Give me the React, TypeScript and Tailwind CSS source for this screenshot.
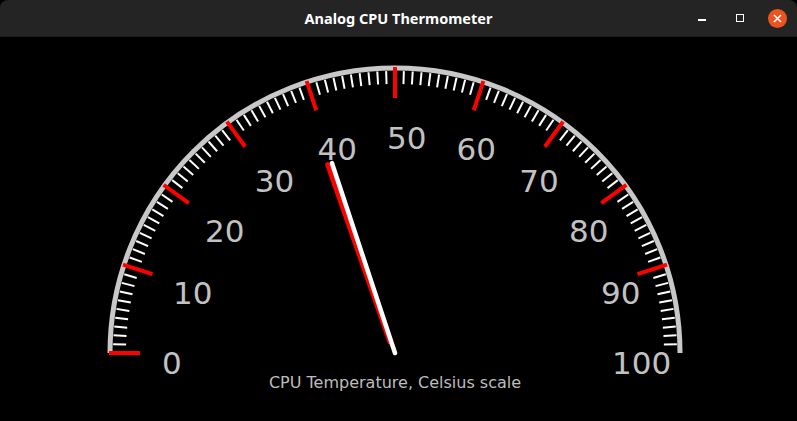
import React from 'react'

const CX = 395
const CY = 353
const VALUE = 39.8

const polar = (r: number, deg: number) => {
   const a = (deg * Math.PI) / 180
   return { x: CX + r * Math.cos(a), y: CY - r * Math.sin(a) }
}

const angleOf = (v: number) => 180 - v * 1.8

function TitleBar() {
   return (
      <header className="relative flex h-[37px] shrink-0 items-center justify-center rounded-t-[8px] bg-[#242424] border-b border-[#1a1a1a]">
         <h1 className="text-[14.5px] font-bold text-white font-['Noto_Sans',sans-serif] leading-none">
            Analog CPU Thermometer
         </h1>
         <div className="absolute right-[10px] top-0 flex h-full items-center gap-[18px]">
            <button className="flex h-[20px] w-[20px] items-center justify-center">
               <span className="mt-[4px] block h-[1.5px] w-[8px] bg-white" />
            </button>
            <button className="flex h-[20px] w-[20px] items-center justify-center">
               <span className="block h-[8px] w-[8px] border-[1.5px] border-white" />
            </button>
            <button className="flex h-[19px] w-[19px] items-center justify-center rounded-full bg-[#e95420]">
               <svg width="9" height="9" viewBox="0 0 9 9">
                  <path d="M1 1 L8 8 M8 1 L1 8" stroke="white" strokeWidth="1.6" />
               </svg>
            </button>
         </div>
      </header>
   )
}

function Gauge() {
   // one tick per degree, the 100 mark itself is not drawn
   const ticks = Array.from({ length: 100 }, (_, i) => i)
   const labels = Array.from({ length: 11 }, (_, i) => i * 10)
   const bandStart = polar(285, 180)
   const bandEnd = polar(285, 0)
   const na = angleOf(VALUE)
   const tip = polar(200, na)
   const perp = ((na + 90) * Math.PI) / 180
   const dx = 4.5 * Math.cos(perp)
   const dy = -4.5 * Math.sin(perp)
   const redEnd = polar(12, na)

   return (
      <svg width="797" height="384" viewBox="0 37 797 384" className="block">
         <path
            d={`M ${bandStart.x} ${bandStart.y} A 285 285 0 0 1 ${bandEnd.x} ${bandEnd.y}`}
            fill="none"
            stroke="#c8c8c8"
            strokeWidth="5"
         />
         {ticks.map((i) => {
            const deg = angleOf(i)
            const major = i % 10 === 0
            const a = polar(major ? 255 : 269, deg)
            const b = polar(major ? 286 : 282, deg)
            return (
               <line
                  key={i}
                  x1={a.x}
                  y1={a.y}
                  x2={b.x}
                  y2={b.y}
                  stroke={major ? '#ff0000' : '#ffffff'}
                  strokeWidth={major ? 4 : 2}
               />
            )
         })}
         {labels.map((v) => {
            const p = polar(225, angleOf(v))
            return (
               <text
                  key={v}
                  x={p.x - 8}
                  y={p.y + 21}
                  fill="#c2c2c2"
                  fontSize="31"
                  fontFamily="'DejaVu Sans', sans-serif"
               >
                  {v}
               </text>
            )
         })}
         <line
            x1={redEnd.x + dx * 0.3}
            y1={redEnd.y + dy * 0.3}
            x2={tip.x + dx}
            y2={tip.y + dy}
            stroke="#ff0000"
            strokeWidth="5"
            strokeLinecap="round"
         />
         <line
            x1={CX}
            y1={CY}
            x2={tip.x}
            y2={tip.y}
            stroke="#ffffff"
            strokeWidth="4.5"
            strokeLinecap="round"
         />
         <text
            x={CX}
            y={388}
            textAnchor="middle"
            fill="#bdbdbd"
            fontSize="16"
            fontFamily="'DejaVu Sans', sans-serif"
         >
            CPU Temperature, Celsius scale
         </text>
      </svg>
   )
}

export default function App() {
   return (
      <div className="flex h-[421px] w-[797px] flex-col overflow-hidden bg-black">
         <TitleBar />
         <main className="flex-1 bg-black">
            <Gauge />
         </main>
      </div>
   )
}
